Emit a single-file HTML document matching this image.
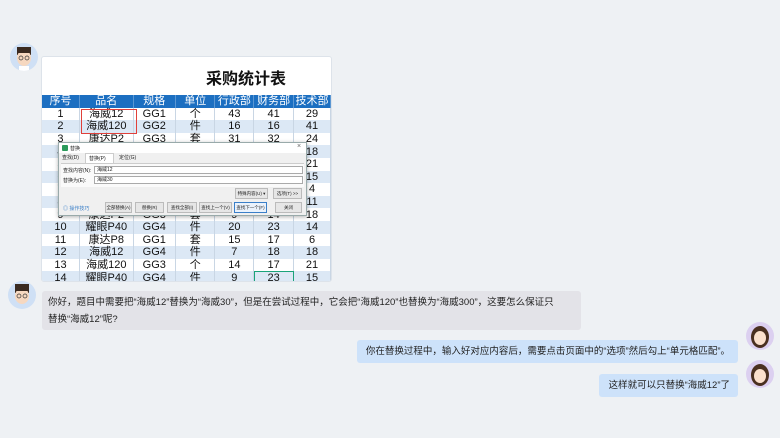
<!DOCTYPE html>
<html><head><meta charset="utf-8"><style>
*{margin:0;padding:0;box-sizing:border-box}
body{width:780px;height:438px;background:#eef1f4;font-family:"Liberation Sans","Noto Sans CJK SC",sans-serif;position:relative;overflow:hidden}
.abs{position:absolute}
.panel{left:41px;top:56px;width:291px;height:226px;background:#fff;border:1px solid #dde3ea;border-radius:3px;overflow:hidden}
.title{position:absolute;left:164px;top:8px;font-size:16px;font-weight:bold;color:#111}
table{position:absolute;left:0;top:38px;border-collapse:collapse;font-size:11px;color:#111}
td{height:12.6px;text-align:center;padding:0;line-height:12px;border-right:1px solid #c9d6e4;white-space:nowrap}
tr.h td{background:#1c6fc1;color:#fff;border-right:1px solid #5b97d3}
tr.b td{background:#dce8f5}
.av{position:absolute;width:28px;height:28px;border-radius:50%;background:#cfe0f5;overflow:hidden}
.bub{position:absolute;font-size:9.5px;color:#222;border-radius:3px;line-height:17px;white-space:nowrap}
.dlg{left:58px;top:142px;width:249px;height:74px;background:#f0f0f0;border:1px solid #9aa;box-shadow:0 1px 4px rgba(0,0,0,.3);font-size:5px;color:#222;white-space:nowrap}
.btn{position:absolute;height:11px;border:1px solid #bbb;background:#e6e6e6;text-align:center;line-height:9px;font-size:4.5px;white-space:nowrap;overflow:hidden}
.inp{position:absolute;left:35px;width:209px;height:8px;background:#fff;border:1px solid #aaa;font-size:5px;line-height:6px;padding-left:2px}
</style></head><body>
<div class="av" style="left:10px;top:43px"><svg width="28" height="28"><rect x="7" y="4" width="14" height="8" fill="#3a2a20"/><ellipse cx="14" cy="15" rx="7" ry="8" fill="#f6d8c0"/><rect x="7" y="5" width="14" height="5" fill="#3a2a20"/><circle cx="11" cy="15" r="2" fill="none" stroke="#333" stroke-width=".7"/><circle cx="17" cy="15" r="2" fill="none" stroke="#333" stroke-width=".7"/><rect x="9" y="23" width="10" height="5" fill="#fff"/></svg></div>
<div class="abs panel">
<div class="title">采购统计表</div>
<table>
<tr class="h"><td style="width:38px">序号</td><td style="width:54px">品名</td><td style="width:43px">规格</td><td style="width:40px">单位</td><td style="width:39px">行政部</td><td style="width:40px">财务部</td><td style="width:37px">技术部</td></tr>
<tr><td>1</td><td>海威12</td><td>GG1</td><td>个</td><td>43</td><td>41</td><td>29</td></tr>
<tr class="b"><td>2</td><td>海威120</td><td>GG2</td><td>件</td><td>16</td><td>16</td><td>41</td></tr>
<tr><td>3</td><td>康达P2</td><td>GG3</td><td>套</td><td>31</td><td>32</td><td>24</td></tr>
<tr class="b"><td>4</td><td>海威12</td><td>GG1</td><td>个</td><td>12</td><td>15</td><td>18</td></tr>
<tr><td>5</td><td>海威120</td><td>GG2</td><td>件</td><td>14</td><td>16</td><td>21</td></tr>
<tr class="b"><td>6</td><td>耀眼P40</td><td>GG3</td><td>套</td><td>18</td><td>12</td><td>15</td></tr>
<tr><td>7</td><td>海威12</td><td>GG1</td><td>个</td><td>9</td><td>8</td><td>4</td></tr>
<tr class="b"><td>8</td><td>海威120</td><td>GG2</td><td>件</td><td>22</td><td>19</td><td>11</td></tr>
<tr><td>9</td><td>康达P2</td><td>GG3</td><td>套</td><td>9</td><td>14</td><td>18</td></tr>
<tr class="b"><td>10</td><td>耀眼P40</td><td>GG4</td><td>件</td><td>20</td><td>23</td><td>14</td></tr>
<tr><td>11</td><td>康达P8</td><td>GG1</td><td>套</td><td>15</td><td>17</td><td>6</td></tr>
<tr class="b"><td>12</td><td>海威12</td><td>GG4</td><td>件</td><td>7</td><td>18</td><td>18</td></tr>
<tr><td>13</td><td>海威120</td><td>GG3</td><td>个</td><td>14</td><td>17</td><td>21</td></tr>
<tr class="b"><td>14</td><td>耀眼P40</td><td>GG4</td><td>件</td><td>9</td><td style="outline:1px solid #1aa37a;outline-offset:-1px">23</td><td>15</td></tr>
</table>
<div class="abs" style="left:39px;top:52px;width:56px;height:25px;border:1px solid #e0403a"></div>
</div>
<div class="abs dlg">
<div class="abs" style="left:0;top:0;width:247px;height:10px;background:#fff"></div>
<div class="abs" style="left:3px;top:2px;width:6px;height:6px;background:#2a9a5a;border-radius:1px"></div>
<div class="abs" style="left:11px;top:2px">替换</div>
<div class="abs" style="left:238px;top:0;font-size:7px;color:#666">×</div>
<div class="abs" style="left:3px;top:11px;font-size:5px">查找(D)</div>
<div class="abs" style="left:26px;top:10px;width:29px;height:10px;background:#fff;border:1px solid #ccc;border-bottom:none;padding:1px 3px">替换(P)</div>
<div class="abs" style="left:60px;top:11px">定位(G)</div>
<div class="abs" style="left:2px;top:20px;width:243px;height:24px;background:#fafafa;border-top:1px solid #ccc"></div>
<div class="abs" style="left:4px;top:24px">查找内容(N):</div><div class="inp" style="top:23px">海威12</div>
<div class="abs" style="left:4px;top:34px">替换为(E):</div><div class="inp" style="top:33px">海威30</div>
<div class="btn" style="left:176px;top:45px;width:33px">特殊内容(U) ▾</div>
<div class="btn" style="left:214px;top:45px;width:29px">选项(T) &gt;&gt;</div>
<div class="abs" style="left:4px;top:62px;color:#3a7fc8">◎ 操作技巧</div>
<div class="btn" style="left:46px;top:59px;width:27px">全部替换(A)</div>
<div class="btn" style="left:76px;top:59px;width:29px">替换(R)</div>
<div class="btn" style="left:108px;top:59px;width:30px">查找全部(I)</div>
<div class="btn" style="left:140px;top:59px;width:33px">查找上一个(V)</div>
<div class="btn" style="left:175px;top:59px;width:33px;border-color:#3a7fc8;background:#eaf2fc">查找下一个(F)</div>
<div class="btn" style="left:216px;top:59px;width:27px">关闭</div>
</div>
<div class="av" style="left:8px;top:281px"><svg width="28" height="28"><rect x="7" y="3" width="14" height="9" fill="#3a2a20"/><ellipse cx="14" cy="15" rx="7" ry="8" fill="#f6d8c0"/><rect x="7" y="4" width="14" height="6" fill="#3a2a20"/><circle cx="11" cy="15" r="2" fill="none" stroke="#333" stroke-width=".7"/><circle cx="17" cy="15" r="2" fill="none" stroke="#333" stroke-width=".7"/></svg></div>
<div class="bub" style="left:42px;top:291px;width:539px;height:39px;background:#e3e3e8;padding:3px 6px">你好，题目中需要把“海威12”替换为“海威30”，但是在尝试过程中，它会把“海威120”也替换为“海威300”，这要怎么保证只<br>替换“海威12”呢?</div>
<div class="av" style="left:746px;top:322px;background:#dcd0f0"><svg width="28" height="28"><ellipse cx="14" cy="15" rx="9" ry="11" fill="#4a3020"/><ellipse cx="14" cy="16" rx="6" ry="7" fill="#fbe0cc"/></svg></div>
<div class="bub" style="left:357px;top:340px;width:381px;height:23px;background:#cde2fa;padding:3px 8px;text-align:right">你在替换过程中，输入好对应内容后，需要点击页面中的“选项”然后勾上“单元格匹配”。</div>
<div class="av" style="left:746px;top:360px;background:#dcd0f0"><svg width="28" height="28"><ellipse cx="14" cy="15" rx="9" ry="11" fill="#4a3020"/><ellipse cx="14" cy="16" rx="6" ry="7" fill="#fbe0cc"/></svg></div>
<div class="bub" style="left:599px;top:374px;width:139px;height:23px;background:#cde2fa;padding:3px 8px;text-align:right">这样就可以只替换“海威12”了</div>
</body></html>
